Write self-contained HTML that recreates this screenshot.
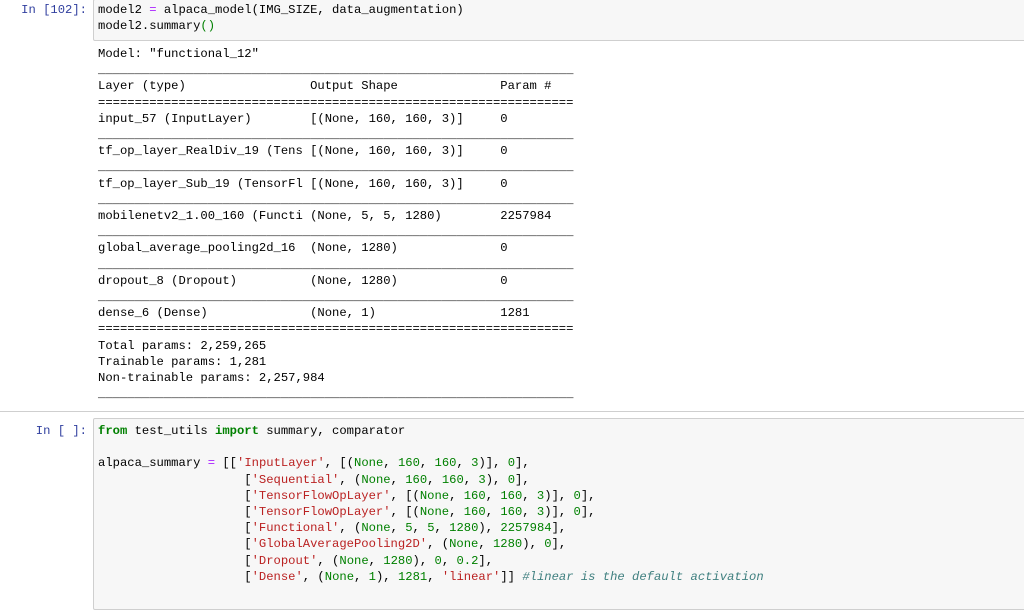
<!DOCTYPE html>
<html><head><meta charset="utf-8"><style>
body{margin:0;width:1024px;height:595px;background:#fff;overflow:hidden;position:relative;font-family:"Liberation Mono",monospace;font-size:12.2px;}
pre{margin:0;font-family:"Liberation Mono",monospace;font-size:12.2px;line-height:16.2px;color:#000;}
.prompt{position:absolute;color:#303f9f;text-align:right;width:87px;left:0;}
.box{position:absolute;left:93px;right:-2px;background:#f7f7f7;border:1px solid #cfcfcf;border-radius:2px;}
.kw{color:#008000;font-weight:bold}.s{color:#ba2121}.n{color:#008000}.o{color:#aa22ff}.c{color:#408080;font-style:italic}.p{color:#008000}
</style></head><body>
<pre class="prompt" style="top:2px">In [102]:</pre>
<div class="box" style="top:-1px;height:40px"></div>
<pre style="position:absolute;left:98px;top:2px">model2 <span class="o">=</span> alpaca_model(IMG_SIZE, data_augmentation)
model2.summary<span class="p">()</span></pre>
<pre style="position:absolute;left:98px;top:46px">Model: "functional_12"
_________________________________________________________________
Layer (type)                 Output Shape              Param #   
=================================================================
input_57 (InputLayer)        [(None, 160, 160, 3)]     0         
_________________________________________________________________
tf_op_layer_RealDiv_19 (Tens [(None, 160, 160, 3)]     0         
_________________________________________________________________
tf_op_layer_Sub_19 (TensorFl [(None, 160, 160, 3)]     0         
_________________________________________________________________
mobilenetv2_1.00_160 (Functi (None, 5, 5, 1280)        2257984   
_________________________________________________________________
global_average_pooling2d_16  (None, 1280)              0         
_________________________________________________________________
dropout_8 (Dropout)          (None, 1280)              0         
_________________________________________________________________
dense_6 (Dense)              (None, 1)                 1281      
=================================================================
Total params: 2,259,265
Trainable params: 1,281
Non-trainable params: 2,257,984
_________________________________________________________________</pre>
<div style="position:absolute;left:0;right:0;top:411px;height:1px;background:#cfcfcf"></div>
<pre class="prompt" style="top:423px">In [ ]:</pre>
<div class="box" style="top:418px;height:190px"></div>
<pre style="position:absolute;left:98px;top:423px"><span class="kw">from</span> test_utils <span class="kw">import</span> summary, comparator

alpaca_summary <span class="o">=</span> [[<span class="s">'InputLayer'</span>, [(<span class="n">None</span>, <span class="n">160</span>, <span class="n">160</span>, <span class="n">3</span>)], <span class="n">0</span>],
                    [<span class="s">'Sequential'</span>, (<span class="n">None</span>, <span class="n">160</span>, <span class="n">160</span>, <span class="n">3</span>), <span class="n">0</span>],
                    [<span class="s">'TensorFlowOpLayer'</span>, [(<span class="n">None</span>, <span class="n">160</span>, <span class="n">160</span>, <span class="n">3</span>)], <span class="n">0</span>],
                    [<span class="s">'TensorFlowOpLayer'</span>, [(<span class="n">None</span>, <span class="n">160</span>, <span class="n">160</span>, <span class="n">3</span>)], <span class="n">0</span>],
                    [<span class="s">'Functional'</span>, (<span class="n">None</span>, <span class="n">5</span>, <span class="n">5</span>, <span class="n">1280</span>), <span class="n">2257984</span>],
                    [<span class="s">'GlobalAveragePooling2D'</span>, (<span class="n">None</span>, <span class="n">1280</span>), <span class="n">0</span>],
                    [<span class="s">'Dropout'</span>, (<span class="n">None</span>, <span class="n">1280</span>), <span class="n">0</span>, <span class="n">0.2</span>],
                    [<span class="s">'Dense'</span>, (<span class="n">None</span>, <span class="n">1</span>), <span class="n">1281</span>, <span class="s">'linear'</span>]] <span class="c">#linear is the default activation</span></pre>
</body></html>
